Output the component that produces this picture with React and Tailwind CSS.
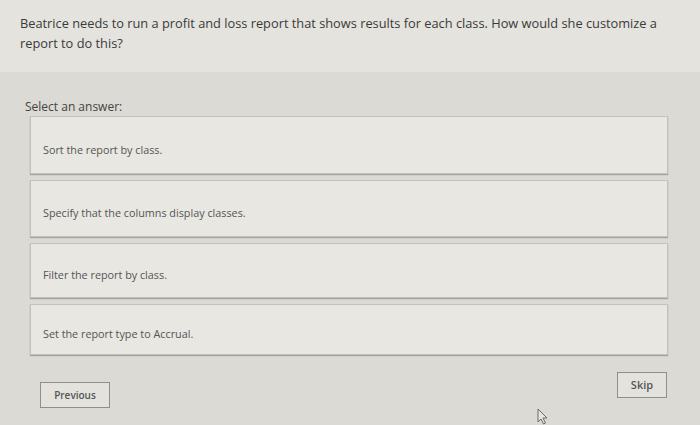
const OPTIONS = [
  { text: 'Sort the report by class.', h: 'h-[58px]' },
  { text: 'Specify that the columns display classes.', h: 'h-[57px]' },
  { text: 'Filter the report by class.', h: 'h-[55px]' },
  { text: 'Set the report type to Accrual.', h: 'h-[51px]' },
];

export default function App() {
  return (
    <div className="w-[700px] h-[425px] bg-[#dbdad5] flex flex-col overflow-hidden font-['Open_Sans',sans-serif] text-[#4f4f4f]">
      {/* Question */}
      <div className="shrink-0 h-[72px] bg-[#e4e3de] px-5 pt-[13px]">
        <p className="text-[12.8px] leading-[20px] text-[#3a3a3a] whitespace-nowrap">
          Beatrice needs to run a profit and loss report that shows results for each class. How would she customize a
          <br />
          report to do this?
        </p>
      </div>

      <div className="shrink-0 px-[25px] pt-[27px] text-[12px] leading-4 text-[#444]">Select an answer:</div>

      {/* Answers */}
      <div className="shrink-0 flex flex-col gap-[6px] pl-[30px] pr-[32px] mt-[1px]">
        {OPTIONS.map((o) => (
          <div
            key={o.text}
            className={
              'shrink-0 flex items-center pt-[10px] px-[12px] bg-[#e8e7e2] border border-[#c2c1bc] shadow-[0_1px_1px_rgba(0,0,0,0.25)] text-[10.8px] text-[#555] ' +
              o.h
            }
          >
            {o.text}
          </div>
        ))}
      </div>

      {/* Nav */}
      <div className="shrink-0 flex justify-between pl-[40px] pr-[33px] pt-[17px]">
        <button className="mt-[10px] w-[70px] h-[26px] bg-[#e3e2dd] border border-[#8e8e8a] text-[10px] font-semibold text-[#555]">
          Previous
        </button>
        <button className="w-[50px] h-[26px] bg-[#e3e2dd] border border-[#8e8e8a] text-[11px] font-semibold text-[#555]">
          Skip
        </button>
      </div>

      <div className="flex-1 flex items-end pl-[537px] pb-[1px]">
        <svg width="12" height="17" viewBox="0 0 12 17">
          <path d="M1 1 L1 14 L4 11 L6.5 16 L8.5 15 L6 10 L10 10 Z" fill="#e6e5e0" stroke="#6a6a6a" strokeWidth="1" strokeLinejoin="round" />
        </svg>
      </div>
      <div className="shrink-0 h-[5px] bg-[#eeede9]" />
    </div>
  );
}
